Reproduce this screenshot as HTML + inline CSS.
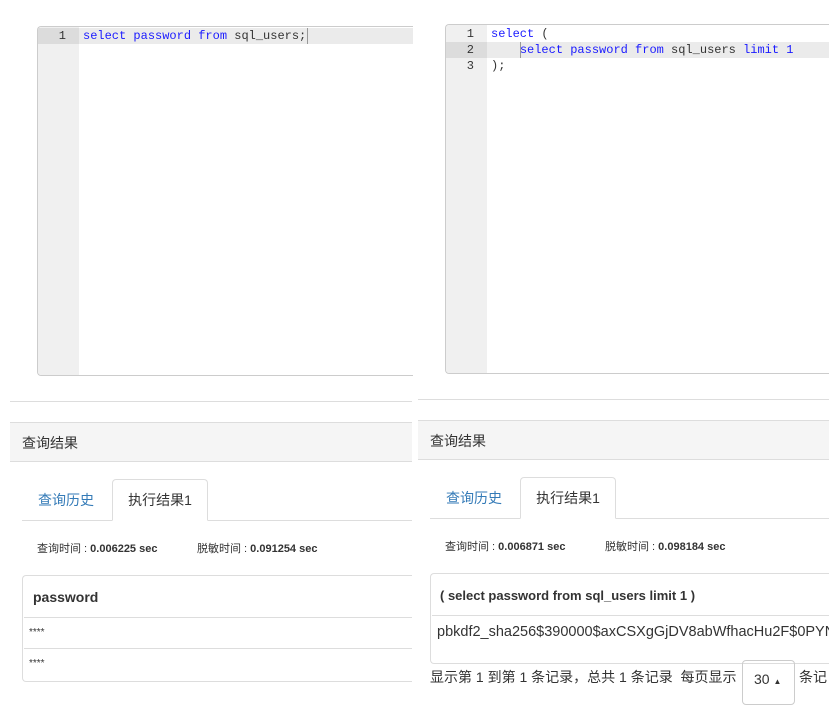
<!DOCTYPE html>
<html><head><meta charset="utf-8"><style>
body{margin:0;width:829px;height:701px;overflow:hidden;background:#fff;font-family:"Liberation Sans","Noto Sans CJK SC",sans-serif;color:#333;position:relative}
.a{position:absolute}
.ed{position:absolute;border:1px solid #ccc;border-right:none;border-radius:4px 0 0 4px;background:#fff;overflow:hidden}
.gut{position:absolute;left:0;top:0;bottom:0;width:41px;background:#f0f0f0}
.ln{position:absolute;left:0;width:100%;height:16px;font:12px/16px "Liberation Mono",monospace;white-space:pre}
.num{position:absolute;width:28px;text-align:right;color:#333}
.k{color:#1a1aff}
.hd{position:absolute;background:#f5f5f5;border-top:1px solid #ddd;border-bottom:1px solid #ddd;font-size:14px}
.tabline{position:absolute;height:1px;background:#ddd}
.tab{position:absolute;border:1px solid #ddd;border-bottom:1px solid #fff;border-radius:4px 4px 0 0;background:#fff;font-size:14px;text-align:center;box-sizing:border-box}
.tm{position:absolute;font-size:11px;color:#333}
.tb{position:absolute;border:1px solid #ddd;border-right:none;border-radius:4px 0 0 4px;box-sizing:border-box}
</style></head><body>
<!-- LEFT -->
<div class="ed" style="left:37px;top:26px;width:375px;height:348px">
 <div class="gut"></div>
 <div class="ln" style="top:1px;background:#ebebeb"><span class="a" style="left:0;top:0;width:41px;height:16px;background:#dcdcdc"></span><span class="num" style="left:0">1</span><span class="a" style="left:45px"><span class="k">select</span> <span class="k">password</span> <span class="k">from</span> sql_users;</span><span class="a" style="left:269px;top:0;width:1px;height:16px;background:#999"></span></div>
</div>
<div class="a" style="left:10px;top:401px;width:402px;height:1px;background:#ddd"></div>
<div class="hd" style="left:10px;top:422px;width:402px;height:40px;line-height:40px;padding-left:12px;box-sizing:border-box">查询结果</div>
<div class="tabline" style="left:22px;top:520px;width:390px"></div>
<div class="a" style="left:38px;top:490px;font-size:14px;color:#337ab7">查询历史</div>
<div class="tab" style="left:112px;top:479px;width:96px;height:42px;line-height:40px">执行结果1</div>
<div class="tm" style="left:37px;top:540px">查询时间 : <b>0.006225 sec</b></div>
<div class="tm" style="left:197px;top:540px">脱敏时间 : <b>0.091254 sec</b></div>
<div class="tb" style="left:22px;top:575px;width:390px;height:107px">
 <div class="a" style="left:10px;top:13px;font-size:14px;font-weight:bold">password</div>
 <div class="a" style="left:1px;top:41px;right:0;height:1px;background:#ddd"></div>
 <div class="a" style="left:6px;top:51px;font-size:10px">****</div>
 <div class="a" style="left:1px;top:72px;right:0;height:1px;background:#ddd"></div>
 <div class="a" style="left:6px;top:82px;font-size:10px">****</div>
</div>
<!-- RIGHT -->
<div class="ed" style="left:445px;top:24px;width:384px;height:348px">
 <div class="gut"></div>
 <div class="ln" style="top:1px"><span class="num" style="left:0">1</span><span class="a" style="left:45px"><span class="k">select</span> (</span></div>
 <div class="ln" style="top:17px;background:#ebebeb"><span class="a" style="left:0;top:0;width:41px;height:16px;background:#dcdcdc"></span><span class="num" style="left:0">2</span><span class="a" style="left:45px">    <span class="k">select</span> <span class="k">password</span> <span class="k">from</span> sql_users <span class="k">limit</span> <span class="k">1</span></span><span class="a" style="left:74px;top:0;width:1px;height:16px;background:#999"></span></div>
 <div class="ln" style="top:33px"><span class="num" style="left:0">3</span><span class="a" style="left:45px">);</span></div>
</div>
<div class="a" style="left:418px;top:399px;width:411px;height:1px;background:#ddd"></div>
<div class="hd" style="left:418px;top:420px;width:411px;height:40px;line-height:40px;padding-left:12px;box-sizing:border-box">查询结果</div>
<div class="tabline" style="left:430px;top:518px;width:399px"></div>
<div class="a" style="left:446px;top:488px;font-size:14px;color:#337ab7">查询历史</div>
<div class="tab" style="left:520px;top:477px;width:96px;height:42px;line-height:40px">执行结果1</div>
<div class="tm" style="left:445px;top:538px">查询时间 : <b>0.006871 sec</b></div>
<div class="tm" style="left:605px;top:538px">脱敏时间 : <b>0.098184 sec</b></div>
<div class="tb" style="left:430px;top:573px;width:399px;height:91px">
 <div class="a" style="left:9px;top:14px;font-size:13px;font-weight:bold;white-space:nowrap">( select password from sql_users limit 1 )</div>
 <div class="a" style="left:1px;top:41px;right:0;height:1px;background:#ddd"></div>
 <div class="a" style="left:6px;top:50px;font-size:14.5px;white-space:nowrap">pbkdf2_sha256$390000$axCSXgGjDV8abWfhacHu2F$0PYN</div>
</div>
<div class="a" style="left:430px;top:667px;font-size:14px;white-space:nowrap">显示第 1 到第 1 条记录，总共 1 条记录&nbsp; 每页显示</div>
<div class="a" style="left:742px;top:660px;width:53px;height:45px;border:1px solid #ccc;border-radius:4px;box-sizing:border-box;font-size:14px;padding:10px 0 0 11px">30 <span style="font-size:8px">▲</span></div>
<div class="a" style="left:799px;top:667px;font-size:14px">条记</div>
</body></html>
